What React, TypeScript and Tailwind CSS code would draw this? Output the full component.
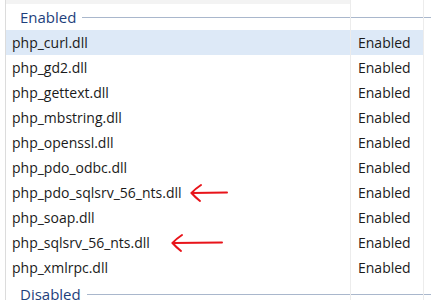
const rows = [
  'php_curl.dll',
  'php_gd2.dll',
  'php_gettext.dll',
  'php_mbstring.dll',
  'php_openssl.dll',
  'php_pdo_odbc.dll',
  'php_pdo_sqlsrv_56_nts.dll',
  'php_soap.dll',
  'php_sqlsrv_56_nts.dll',
  'php_xmlrpc.dll',
];

function RedArrow({ width }: { width: number }) {
  return (
    <svg width={width} height={20} viewBox={`0 0 ${width} 20`} className="shrink-0">
      <path
        d={`M3 10 L${width - 2} 9.5`}
        stroke="#e8141a"
        strokeWidth="2"
        strokeLinecap="round"
        fill="none"
      />
      <path
        d="M12 2 Q6 6 2.5 10 Q6 14 11 18"
        stroke="#e8141a"
        strokeWidth="2"
        strokeLinecap="round"
        fill="none"
      />
    </svg>
  );
}

function GroupHeader({ label }: { label: string }) {
  return (
    <div className="flex h-[26px] items-center gap-[6px] pl-[14px]">
      <span className="text-[15px] text-[#1e3f7c]">{label}</span>
      <div className="h-px flex-1 bg-[#a9b7cc]" />
    </div>
  );
}

export default function App() {
  return (
    <div
      className="h-[300px] w-[431px] overflow-hidden bg-white text-[#1a1a1a]"
      style={{ fontFamily: '"Open Sans", "Noto Sans", sans-serif' }}
    >
      <div className="relative ml-[5px] h-full border-l border-[#dcdcdc]">
        {/* column guides */}
        <div className="pointer-events-none absolute inset-y-0 left-[344px] w-px bg-[#ececec]" />
        <div className="pointer-events-none absolute inset-y-0 left-[417px] w-px bg-[#ececec]" />

        <div className="h-[4px] w-[345px] bg-[#f3f3f3]" />
        <GroupHeader label="Enabled" />

        {rows.map((name, i) => (
          <div
            key={name}
            className={`flex h-[25px] w-[418px] items-center text-[14px] ${
              i === 0 ? 'bg-[#dde9f7]' : ''
            }`}
          >
            <div className="flex w-[345px] items-center pl-[6px]">
              <span>{name}</span>
              {name === 'php_pdo_sqlsrv_56_nts.dll' && (
                <span className="ml-[7px] flex">
                  <RedArrow width={40} />
                </span>
              )}
              {name === 'php_sqlsrv_56_nts.dll' && (
                <span className="ml-[20px] flex">
                  <RedArrow width={54} />
                </span>
              )}
            </div>
            <div className="pl-[7px]">Enabled</div>
          </div>
        ))}

        <div className="pt-[1px]">
          <GroupHeader label="Disabled" />
        </div>
      </div>
    </div>
  );
}
